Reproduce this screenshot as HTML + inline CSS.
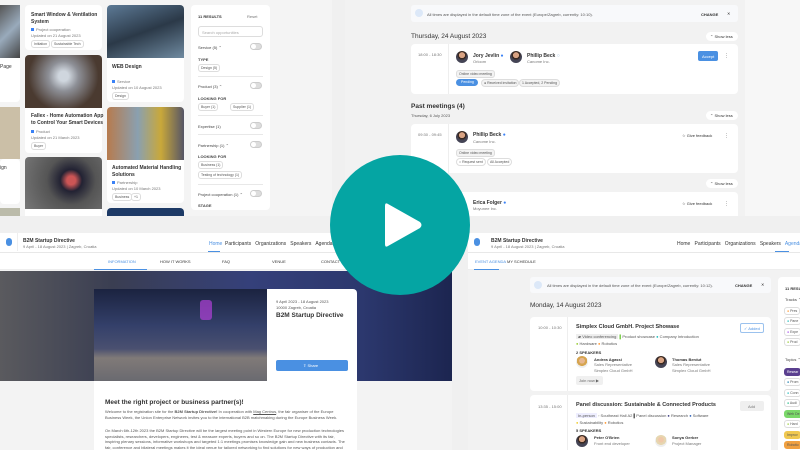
<!DOCTYPE html>
<html><head><meta charset="utf-8"><style>
*{box-sizing:border-box;margin:0;padding:0}
body{width:800px;height:450px;overflow:hidden;background:#f0f0f0;font-family:"Liberation Sans",sans-serif;color:#333;position:relative}
.a{position:absolute}
.w{background:#fff;border-radius:4px}
.t{font-size:5px;color:#333;white-space:nowrap}
.s{font-size:4px;color:#777;white-space:nowrap}
.b{font-weight:bold}
.chip{position:absolute;font-size:3.5px;border:1px solid #ddd;border-radius:3px;padding:1px 2px;color:#555;background:#fff;white-space:nowrap}
.tog{position:absolute;width:12px;height:7px;border-radius:4px;background:#ddd;border:1px solid #ccc}
.tog:after{content:"";position:absolute;left:0;top:0;width:5px;height:5px;border-radius:50%;background:#fff}
.dot{display:inline-block;width:3px;height:3px;background:#3b82f6;margin-right:2px;vertical-align:middle}
.av{position:absolute;width:12px;height:12px;border-radius:50%;background:radial-gradient(circle at 50% 35%,#d9a383 0 30%,#3a2a22 31% 45%,#445 46%)}
.hr{position:absolute;height:1px;background:#e8e8e8}
</style></head><body>

<!-- TOP LEFT PANEL -->
<div class="a" style="left:0;top:0;width:332px;height:216px;background:#f4f4f4"></div>
<!-- col1 -->
<div class="a" style="left:0;top:5px;width:20px;height:53px;background:linear-gradient(135deg,#555,#9ab,#444)"></div>
<div class="a w" style="left:0;top:58px;width:20px;height:44px;border-radius:0 0 4px 0"></div>
<div class="a t" style="left:0;top:64px">Page</div>
<div class="a" style="left:0;top:107px;width:20px;height:52px;background:#cbbfa7"></div>
<div class="a w" style="left:0;top:159px;width:20px;height:45px"></div>
<div class="a t" style="left:0;top:165px">ign</div>
<div class="a" style="left:0;top:208px;width:20px;height:8px;background:#bba"></div>
<!-- col2 -->
<div class="a w" style="left:25px;top:5px;width:77px;height:45px"></div>
<div class="a t b" style="left:31px;top:12px;line-height:7px">Smart Window &amp; Ventilation<br>System</div>
<div class="a s" style="left:31px;top:27px"><span class="dot"></span>Project cooperation</div>
<div class="a s" style="left:31px;top:33px">Updated on 21 August 2023</div>
<div class="chip" style="left:31px;top:40px">Initiation</div><div class="chip" style="left:51px;top:40px">Sustainable Tech</div>
<div class="a" style="left:25px;top:55px;width:77px;height:53px;border-radius:4px 4px 0 0;background:radial-gradient(circle at 50% 40%,#cfd6de 0 10%,#8d8f96 30%,#4a3a30 70%)"></div>
<div class="a w" style="left:25px;top:108px;width:77px;height:45px;border-radius:0 0 4px 4px"></div>
<div class="a t b" style="left:31px;top:113px;line-height:7px">Fallex - Home Automation App<br>to Control Your Smart Devices</div>
<div class="a s" style="left:31px;top:129px"><span class="dot"></span>Product</div>
<div class="a s" style="left:31px;top:135px">Updated on 21 March 2023</div>
<div class="chip" style="left:31px;top:142px">Buyer</div>
<div class="a" style="left:25px;top:157px;width:77px;height:52px;border-radius:4px 4px 0 0;background:radial-gradient(circle at 60% 45%,#c55 0 8%,#223 20%,#555 45%,#777)"></div>
<div class="a w" style="left:25px;top:209px;width:77px;height:7px;border-radius:0"></div>
<!-- col3 -->
<div class="a" style="left:107px;top:5px;width:77px;height:53px;border-radius:4px 4px 0 0;background:linear-gradient(160deg,#5d7a96,#2b3948 50%,#6f8aa0)"></div>
<div class="a w" style="left:107px;top:58px;width:77px;height:44px;border-radius:0 0 4px 4px"></div>
<div class="a t b" style="left:112px;top:64px">WEB Design</div>
<div class="a s" style="left:112px;top:79px"><span class="dot"></span>Service</div>
<div class="a s" style="left:112px;top:85px">Updated on 10 August 2023</div>
<div class="chip" style="left:112px;top:92px">Design</div>
<div class="a" style="left:107px;top:107px;width:77px;height:53px;border-radius:4px 4px 0 0;background:linear-gradient(90deg,#b77b4e,#8aa0b0 40%,#c9a83a 70%,#556)"></div>
<div class="a w" style="left:107px;top:160px;width:77px;height:43px;border-radius:0 0 4px 4px"></div>
<div class="a t b" style="left:112px;top:165px;line-height:7px">Automated Material Handling<br>Solutions</div>
<div class="a s" style="left:112px;top:180px"><span class="dot"></span>Partnership</div>
<div class="a s" style="left:112px;top:186px">Updated on 10 March 2023</div>
<div class="chip" style="left:112px;top:193px">Business</div><div class="chip" style="left:131px;top:193px">+1</div>
<div class="a" style="left:107px;top:208px;width:77px;height:8px;background:#1d3a66;border-radius:4px 4px 0 0"></div>
<!-- filter -->
<div class="a w" style="left:191px;top:5px;width:79px;height:205px"></div>
<div class="a s b" style="left:198px;top:14px;color:#333">11 RESULTS</div>
<div class="a s" style="left:247px;top:14px">Reset</div>
<div class="a" style="left:198px;top:26px;width:65px;height:11px;border:1px solid #ddd;border-radius:3px"></div>
<div class="a s" style="left:202px;top:30px;color:#aaa">Search opportunities</div>
<div class="a s" style="left:198px;top:45px;color:#444">Service (5) ⌃</div><div class="tog" style="left:250px;top:43px"></div>
<div class="a s b" style="left:198px;top:57px;color:#444">TYPE</div>
<div class="chip" style="left:198px;top:64px">Design (5)</div>
<div class="hr" style="left:198px;top:76px;width:65px"></div>
<div class="a s" style="left:198px;top:84px;color:#444">Product (3) ⌃</div><div class="tog" style="left:250px;top:82px"></div>
<div class="a s b" style="left:198px;top:96px;color:#444">LOOKING FOR</div>
<div class="chip" style="left:198px;top:103px">Buyer (1)</div><div class="chip" style="left:230px;top:103px">Supplier (1)</div>
<div class="hr" style="left:198px;top:115px;width:65px"></div>
<div class="a s" style="left:198px;top:124px;color:#444">Expertise (1)</div><div class="tog" style="left:250px;top:122px"></div>
<div class="hr" style="left:198px;top:134px;width:65px"></div>
<div class="a s" style="left:198px;top:143px;color:#444">Partnership (1) ⌃</div><div class="tog" style="left:250px;top:141px"></div>
<div class="a s b" style="left:198px;top:154px;color:#444">LOOKING FOR</div>
<div class="chip" style="left:198px;top:161px">Business (1)</div>
<div class="chip" style="left:198px;top:171px">Testing of technology (1)</div>
<div class="hr" style="left:198px;top:184px;width:65px"></div>
<div class="a s" style="left:198px;top:192px;color:#444">Project cooperation (1) ⌃</div><div class="tog" style="left:250px;top:190px"></div>
<div class="a s b" style="left:198px;top:203px;color:#444">STAGE</div>

<!-- TOP RIGHT PANEL -->
<div class="a" style="left:345px;top:0;width:400px;height:216px;background:#f2f2f2"></div>
<div class="a" style="left:745px;top:0;width:55px;height:216px;background:#f7f7f7"></div>
<div class="a" style="left:411px;top:5px;width:327px;height:17px;background:#f8f9fb;border-radius:3px"></div>
<div class="a" style="left:415px;top:9px;width:8px;height:8px;border-radius:50%;background:#dce8f8"></div>
<div class="a s" style="left:427px;top:12px;color:#555">All times are displayed in the default time zone of the event (Europe/Zagreb, currently: 10:10).</div>
<div class="a s b" style="left:701px;top:12px;color:#333">CHANGE</div>
<div class="a s" style="left:727px;top:11px;color:#333">✕</div>
<div class="a" style="left:411px;top:33px;font-size:6.5px;color:#333">Thursday, 24 August 2023</div>
<div class="a w" style="left:706px;top:32px;width:32px;height:9px;border-radius:5px"></div>
<div class="a s" style="left:710px;top:34px;color:#333">⌃ Show less</div>
<div class="a w" style="left:411px;top:44px;width:327px;height:50px"></div>
<div class="a" style="left:448px;top:44px;width:1px;height:50px;background:#eee"></div>
<div class="a s" style="left:418px;top:52px">18:00 - 18:30</div>
<div class="av" style="left:456px;top:51px"></div>
<div class="a t b" style="left:473px;top:53px">Jory Jevlin <span style="color:#3b82f6">●</span></div>
<div class="a s" style="left:473px;top:59px">Orloom</div>
<div class="av" style="left:510px;top:51px"></div>
<div class="a t b" style="left:527px;top:53px">Phillip Beck <span style="color:#9bd">○</span></div>
<div class="a s" style="left:527px;top:59px">Canome Inc.</div>
<div class="a" style="left:698px;top:51px;width:20px;height:10px;background:#4a90e2;border-radius:2px"></div>
<div class="a s" style="left:702px;top:54px;color:#fff">Accept</div>
<div class="a t" style="left:724px;top:53px">⋮</div>
<div class="chip" style="left:456px;top:70px;background:#f3f3f3">Online video meeting</div>
<div class="a" style="left:456px;top:79px;width:22px;height:7px;border-radius:4px;background:#4a90e2"></div>
<div class="a s" style="left:461px;top:80px;color:#fff;font-size:3.5px">Pending</div>
<div class="chip" style="left:481px;top:79px;background:#f3f3f3;border-radius:4px">● Received invitation</div>
<div class="chip" style="left:519px;top:79px;background:#f3f3f3;border-radius:4px">1 Accepted, 2 Pending</div>
<div class="a" style="left:411px;top:103px;font-size:6.5px;color:#333;font-weight:bold">Past meetings (4)</div>
<div class="a s" style="left:411px;top:113px;color:#555">Thursday, 6 July 2023</div>
<div class="a w" style="left:706px;top:111px;width:32px;height:9px;border-radius:5px"></div>
<div class="a s" style="left:710px;top:113px;color:#333">⌃ Show less</div>
<div class="a w" style="left:411px;top:124px;width:327px;height:49px"></div>
<div class="a" style="left:448px;top:124px;width:1px;height:49px;background:#eee"></div>
<div class="a s" style="left:418px;top:132px">09:30 - 09:45</div>
<div class="av" style="left:456px;top:131px"></div>
<div class="a t b" style="left:473px;top:132px">Phillip Beck <span style="color:#3b82f6">●</span></div>
<div class="a s" style="left:473px;top:139px">Canome Inc.</div>
<div class="a s" style="left:682px;top:133px;color:#333">☆ Give feedback</div>
<div class="a t" style="left:724px;top:133px">⋮</div>
<div class="chip" style="left:456px;top:149px;background:#f3f3f3">Online video meeting</div>
<div class="chip" style="left:456px;top:158px;border-radius:4px">○ Request sent</div>
<div class="chip" style="left:487px;top:158px;border-radius:4px">All Accepted</div>
<div class="a w" style="left:706px;top:179px;width:32px;height:9px;border-radius:5px"></div>
<div class="a s" style="left:710px;top:181px;color:#333">⌃ Show less</div>
<div class="a w" style="left:411px;top:192px;width:327px;height:24px;border-radius:4px 4px 0 0"></div>
<div class="a t b" style="left:473px;top:200px">Erica Folger <span style="color:#3b82f6">●</span></div>
<div class="a s" style="left:473px;top:206px">Moyunee Inc.</div>
<div class="a s" style="left:682px;top:201px;color:#333">☆ Give feedback</div>
<div class="a t" style="left:724px;top:201px">⋮</div>

<!-- BOTTOM LEFT PANEL -->
<div class="a" style="left:0;top:233px;width:452px;height:217px;background:#f3f3f3"></div>
<div class="a" style="left:0;top:233px;width:452px;height:37px;background:#fff;border-bottom:1px solid #eee"></div>
<div class="a" style="left:0;top:233px;width:18px;height:18px;border-right:1px solid #eee"></div>
<div class="a" style="left:6px;top:238px;width:6px;height:8px;border-radius:3px;background:#4a90e2"></div>
<div class="a t b" style="left:23px;top:238px">B2M Startup Directive</div>
<div class="a s" style="left:23px;top:244px">9 April - 18 August 2023 | Zagreb, Croatia</div>
<div class="a t" style="left:209px;top:241px;color:#4a90e2">Home</div>
<div class="a" style="left:208px;top:251px;width:12px;height:1px;background:#4a90e2"></div>
<div class="a t" style="left:225px;top:241px">Participants&nbsp;&nbsp; Organizations&nbsp;&nbsp; Speakers&nbsp;&nbsp; Agenda&nbsp;&nbsp; Ma</div>
<div class="hr" style="left:0;top:252px;width:452px"></div>
<div class="a s" style="left:108px;top:259px;color:#4a90e2">INFORMATION</div>
<div class="a" style="left:94px;top:269px;width:53px;height:1px;background:#4a90e2"></div>
<div class="a s" style="left:160px;top:259px;color:#333">HOW IT WORKS</div>
<div class="a s" style="left:222px;top:259px;color:#333">FAQ</div>
<div class="a s" style="left:272px;top:259px;color:#333">VENUE</div>
<div class="a s" style="left:321px;top:259px;color:#333">CONTACT US</div>
<div class="a" style="left:0;top:271px;width:452px;height:110px;background:linear-gradient(90deg,#5a5a5e,#3a3e52 25%,#35407a 55%,#2c386e 80%,#1c2550)"></div>
<div class="a" style="left:94px;top:289px;width:173px;height:92px;background:linear-gradient(180deg,#1b2340 0%,#34406a 40%,#4a5070 65%,#807a78 75%,#6a6a70 100%)"></div>
<div class="a" style="left:200px;top:300px;width:12px;height:20px;background:#b040d8;opacity:.7;border-radius:3px"></div>
<div class="a" style="left:267px;top:289px;width:90px;height:92px;background:#fff;border-radius:0 4px 0 0"></div>
<div class="a s" style="left:276px;top:299px;color:#555">9 April 2023 - 18 August 2023</div>
<div class="a s" style="left:276px;top:305px;color:#555">10000 Zagreb, Croatia</div>
<div class="a" style="left:276px;top:312px;font-size:6.5px;font-weight:bold;color:#333">B2M Startup Directive</div>
<div class="a" style="left:276px;top:360px;width:72px;height:11px;background:#4a90e2;border-radius:2px"></div>
<div class="a s" style="left:303px;top:363px;color:#fff">⇪ Share</div>
<div class="a" style="left:94px;top:381px;width:263px;height:69px;background:#fff"></div>
<div class="a" style="left:105px;top:399px;font-size:6.5px;font-weight:bold;color:#333">Meet the right project or business partner(s)!</div>
<div class="a s" style="left:105px;top:409px;color:#555;line-height:6px">Welcome to the registration site for the <b>B2M Startup Directive!</b> In cooperation with <u>Mag Centrus</u>, the fair organiser of the Europe<br>Business Week, the Union Enterprise Network invites you to the international B2B matchmaking during the Europe Business Week.</div>
<div class="a s" style="left:105px;top:428px;color:#555;line-height:5.5px">On March 6th-12th 2023 the B2M Startup Directive will be the largest meeting point in Western Europe for new production technologies<br>specialists, researchers, developers, engineers, test &amp; measure experts, buyers and so on. The B2M Startup Directive with its fair,<br>inspiring plenary sessions, informative workshops and targeted 1:1 meetings promises knowledge gain and new business contacts. The<br>fair, conference and bilateral meetings makes it the ideal venue for tailored networking to find solutions for new ways of production and</div>

<!-- BOTTOM RIGHT PANEL -->
<div class="a" style="left:468px;top:233px;width:332px;height:217px;background:#f2f2f2"></div>
<div class="a" style="left:468px;top:233px;width:332px;height:37px;background:#fff;border-bottom:1px solid #eee"></div>
<div class="a" style="left:474px;top:238px;width:6px;height:8px;border-radius:3px;background:#4a90e2"></div>
<div class="a t b" style="left:491px;top:238px">B2M Startup Directive</div>
<div class="a s" style="left:491px;top:244px">9 April - 18 August 2023 | Zagreb, Croatia</div>
<div class="a t" style="left:677px;top:241px">Home&nbsp;&nbsp; Participants&nbsp;&nbsp; Organizations&nbsp;&nbsp; Speakers&nbsp;&nbsp; <span style="color:#4a90e2">Agenda</span>&nbsp;&nbsp; Ma</div>
<div class="a" style="left:775px;top:251px;width:14px;height:1px;background:#4a90e2"></div>
<div class="hr" style="left:468px;top:252px;width:332px"></div>
<div class="a s" style="left:475px;top:259px;color:#4a90e2">EVENT AGENDA</div>
<div class="a" style="left:474px;top:269px;width:25px;height:1px;background:#4a90e2"></div>
<div class="a s" style="left:507px;top:259px;color:#333">MY SCHEDULE</div>
<div class="a" style="left:530px;top:277px;width:241px;height:16px;background:#f8f9fb;border-radius:3px"></div>
<div class="a" style="left:534px;top:281px;width:8px;height:8px;border-radius:50%;background:#dce8f8"></div>
<div class="a s" style="left:547px;top:283px;color:#555">All times are displayed in the default time zone of the event (Europe/Zagreb, currently: 10:12).</div>
<div class="a s b" style="left:735px;top:283px;color:#333">CHANGE</div>
<div class="a s" style="left:761px;top:282px;color:#333">✕</div>
<div class="a" style="left:530px;top:302px;font-size:6.5px;color:#333">Monday, 14 August 2023</div>
<div class="a w" style="left:530px;top:317px;width:241px;height:74px"></div>
<div class="a" style="left:567px;top:317px;width:1px;height:74px;background:#eee"></div>
<div class="a s" style="left:538px;top:325px">10:00 - 10:30</div>
<div class="a t b" style="left:576px;top:324px;font-size:5.5px">Simplex Cloud GmbH. Project Showase</div>
<div class="a" style="left:740px;top:323px;width:24px;height:10px;border:1px solid #9bc2ee;border-radius:2px"></div>
<div class="a s" style="left:744px;top:326px;color:#4a90e2">✓ Added</div>
<div class="a s" style="left:576px;top:334px;color:#555"><span style="background:#eee;padding:0 2px">▰ Video conferencing</span> <span style="color:#7c4">▌</span>Product showcase <span style="color:#2bb">●</span> Company Introduction</div>
<div class="a s" style="left:576px;top:341px;color:#555"><span style="color:#9c3">●</span> Hardware <span style="color:#f93">●</span> Robotics</div>
<div class="a s b" style="left:576px;top:350px;color:#333">2 SPEAKERS</div>
<div class="av" style="left:576px;top:356px;background:radial-gradient(circle at 50% 40%,#e8b890 0 30%,#d6a550 31% 55%,#eee 56%)"></div>
<div class="a s b" style="left:594px;top:357px;color:#333">Andrea Agassi</div>
<div class="a s" style="left:594px;top:362px">Sales Representative</div>
<div class="a s" style="left:594px;top:368px">Simplex Cloud GmbH</div>
<div class="av" style="left:655px;top:356px"></div>
<div class="a s b" style="left:672px;top:357px;color:#333">Thomas Berdut</div>
<div class="a s" style="left:672px;top:362px">Sales Representative</div>
<div class="a s" style="left:672px;top:368px">Simplex Cloud GmbH</div>
<div class="a" style="left:576px;top:376px;width:27px;height:9px;background:#f0f0f0;border-radius:2px"></div>
<div class="a s" style="left:579px;top:378px;color:#666">Join now ▶</div>
<div class="a w" style="left:530px;top:395px;width:241px;height:55px;border-radius:4px 4px 0 0"></div>
<div class="a" style="left:567px;top:395px;width:1px;height:55px;background:#eee"></div>
<div class="a s" style="left:538px;top:404px">13:35 - 15:00</div>
<div class="a t b" style="left:576px;top:402px;font-size:5.5px">Panel discussion: Sustainable &amp; Connected Products</div>
<div class="a" style="left:740px;top:401px;width:24px;height:10px;background:#efefef;border-radius:2px"></div>
<div class="a s" style="left:748px;top:404px">Add</div>
<div class="a s" style="left:576px;top:413px;color:#555"><span style="background:#eef;padding:0 2px">In-person</span> ◦ Southeast Hall A2 ▌Panel discussion <span style="color:#448">●</span> Research <span style="color:#36b">●</span> Software</div>
<div class="a s" style="left:576px;top:420px;color:#555"><span style="color:#ec3">●</span> Sustainability <span style="color:#f93">●</span> Robotics</div>
<div class="a s b" style="left:576px;top:428px;color:#333">5 SPEAKERS</div>
<div class="av" style="left:576px;top:435px"></div>
<div class="a s b" style="left:594px;top:435px;color:#333">Peter O'Brien</div>
<div class="a s" style="left:594px;top:441px">Front end developer</div>
<div class="av" style="left:655px;top:435px;background:radial-gradient(circle at 50% 40%,#f0c8a8 0 30%,#e6d6b0 31% 55%,#eee 56%)"></div>
<div class="a s b" style="left:672px;top:435px;color:#333">Sonya Gerber</div>
<div class="a s" style="left:672px;top:441px">Project Manager</div>
<div class="a" style="left:778px;top:277px;width:22px;height:173px;background:#fff;border-radius:4px 0 0 0"></div>
<div class="a s b" style="left:785px;top:286px;color:#333">11 RESU</div>
<div class="a s" style="left:785px;top:297px;color:#444">Tracks ⌃</div>
<div class="chip" style="left:784px;top:307px"><span style="color:#f93">●</span> Pres</div>
<div class="chip" style="left:784px;top:317px"><span style="color:#2bb">●</span> Pane</div>
<div class="chip" style="left:784px;top:328px"><span style="color:#a5e">●</span> Expe</div>
<div class="chip" style="left:784px;top:338px"><span style="color:#9c3">●</span> Prod</div>
<div class="a s" style="left:785px;top:357px;color:#444">Topics ⌃</div>
<div class="chip" style="left:784px;top:368px;background:#5a3f8f;color:#fff;border-color:#5a3f8f">Resear</div>
<div class="chip" style="left:784px;top:378px"><span style="color:#17a">●</span> Prom</div>
<div class="chip" style="left:784px;top:389px"><span style="color:#2bb">●</span> Conn</div>
<div class="chip" style="left:784px;top:399px"><span style="color:#2b8">●</span> Audi</div>
<div class="chip" style="left:784px;top:410px;background:#7bd86a;border-color:#7bd86a">Web De</div>
<div class="chip" style="left:784px;top:420px"><span style="color:#9c3">●</span> Hard</div>
<div class="chip" style="left:784px;top:431px;background:#f0c850;border-color:#f0c850">Improv</div>
<div class="chip" style="left:784px;top:441px;background:#f0a040;border-color:#f0a040">Robotic</div>

<!-- PLAY BUTTON -->
<div class="a" style="left:330px;top:155px;width:140px;height:140px;border-radius:50%;background:#05a5a3"></div>
<svg class="a" style="left:380px;top:198px" width="48" height="54" viewBox="0 0 48 54"><path d="M8 6 Q5 4 5 8 L5 46 Q5 50 8 48 L40 30 Q43 27 40 24 Z" fill="#fff"/></svg>
</body></html>
